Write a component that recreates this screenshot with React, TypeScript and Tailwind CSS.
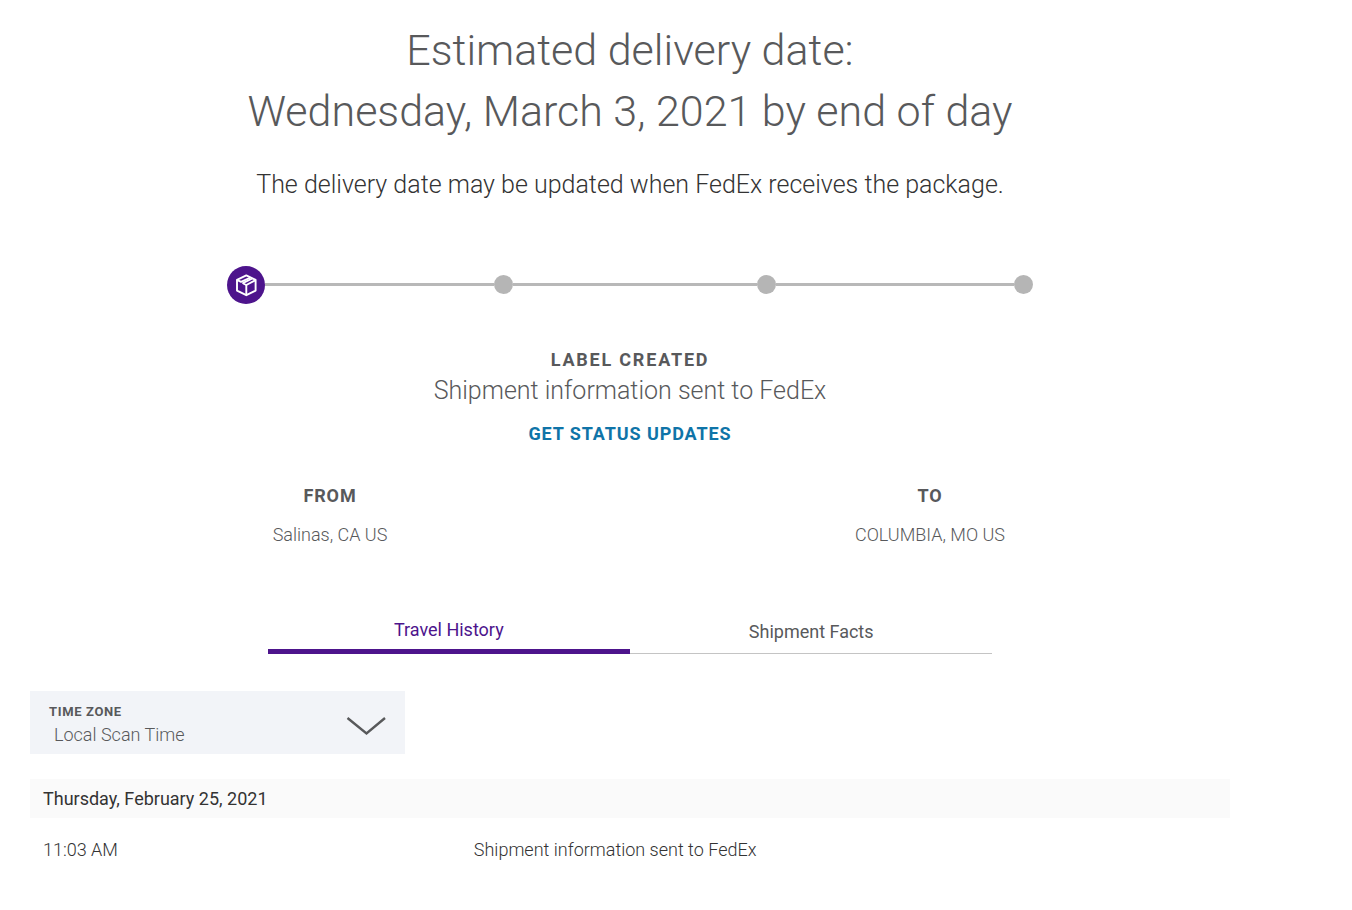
import { useState } from "react";

const TABS = ["Travel History", "Shipment Facts"];

function PackageIcon() {
  return (
    <svg viewBox="0 -2 38 40" className="h-10 w-[38px] shrink-0" role="img" aria-label="Label created">
      <circle cx="19" cy="19" r="19" fill="#4d148c" />
      <g fill="none" stroke="#fff" strokeWidth="1.9" strokeLinejoin="round">
        <path d="M19.3 9.4 L28.6 13.9 V24.6 L19.3 29.2 L10 24.6 V13.9 Z" />
        <path d="M10 13.9 L14 15.9 L23.4 11.6" />
        <path d="M16.2 17.5 L19.3 19 L28.6 14.2" />
        <path d="M16.2 17.9 V16.9 L25.4 12.5" />
        <path d="M19.3 19 V29.2" />
      </g>
    </svg>
  );
}

function Dot() {
  return <span className="size-[19px] shrink-0 rounded-full bg-[#b5b5b5]" />;
}

function ProgressTracker() {
  return (
    <div className="mx-auto mt-[61px] flex w-[67.2%] items-center">
      <PackageIcon />
      <span className="h-[3px] grow-229 basis-0 bg-[#b8b8b8]" />
      <Dot />
      <span className="h-[3px] grow-244 basis-0 bg-[#b8b8b8]" />
      <Dot />
      <span className="h-[3px] grow-238 basis-0 bg-[#b8b8b8]" />
      <Dot />
    </div>
  );
}

function Place({ label, city }: { label: string; city: string }) {
  return (
    <div className="w-1/2">
      <h2 className="text-[18px] leading-6 font-bold tracking-wider">{label}</h2>
      <p className="mt-[13px] text-[18px] leading-7 font-light">{city}</p>
    </div>
  );
}

export default function App() {
  const [tab, setTab] = useState(TABS[0]);

  return (
    <main className="max-w-[1260px] px-[30px] pt-5 pb-10 font-['Roboto','Liberation_Sans',sans-serif] text-[#58595b]">
      <section className="text-center">
        <h1 className="text-[43px] leading-[61px] font-light">
          Estimated delivery date:
          <br />
          Wednesday, March 3, 2021 by end of day
        </h1>
        <p className="mt-[25px] text-[25px] leading-9 font-light text-[#333333]">
          The delivery date may be updated when FedEx receives the package.
        </p>

        <ProgressTracker />

        <h2 className="mt-11 text-[18px] leading-6 font-bold tracking-widest">LABEL CREATED</h2>
        <p className="text-[25px] leading-[38px] font-light">Shipment information sent to FedEx</p>
        <a href="#updates" className="mt-3 inline-block text-[18px] leading-6 font-bold tracking-wider text-[#0f74a8]">
          GET STATUS UPDATES
        </a>

        <div className="mt-[37px] flex justify-between">
          <Place label="FROM" city="Salinas, CA US" />
          <Place label="TO" city="COLUMBIA, MO US" />
        </div>
      </section>

      <div role="tablist" className="mx-auto mt-[61px] grid w-[60.4%] grid-cols-2">
        {TABS.map((name) => (
          <button
            key={name}
            type="button"
            role="tab"
            aria-selected={tab === name}
            onClick={() => setTab(name)}
            className={
              tab === name
                ? "h-11 border-b-[5px] border-[#4d148c] text-[18px] text-[#4d148c]"
                : "h-11 border-b border-[#c4c4c4] text-[18px]"
            }
          >
            {name}
          </button>
        ))}
      </div>

      <div className="relative mt-[37px] w-full max-w-[375px] bg-[#f2f4f8]">
        <div className="flex flex-col pt-[13px]">
          <label htmlFor="zone" className="pl-[19px] text-[13px] leading-4 font-bold tracking-wider">
            TIME ZONE
          </label>
          <select
            id="zone"
            className="w-full cursor-pointer appearance-none bg-transparent pb-1 pl-6 text-[18px] leading-[30px] font-light outline-none"
          >
            <option>Local Scan Time</option>
            <option>Current Time Zone</option>
          </select>
        </div>
        <svg
          viewBox="0 0 40 20"
          className="pointer-events-none absolute top-[25px] right-[19px] h-5 w-10"
          fill="none"
          stroke="#58595b"
          strokeWidth="2.4"
          aria-hidden="true"
        >
          <path d="M1.5 2 L20.5 17.5 L39 2" />
        </svg>
      </div>

      <table className="mt-[25px] w-full table-fixed border-collapse text-left text-[18px] leading-[39px] text-[#333333]">
        <colgroup>
          <col className="w-[35.9%]" />
          <col />
        </colgroup>
        <thead>
          <tr className="bg-[#fafafa]">
            <th colSpan={2} scope="colgroup" className="px-[13px] font-normal">
              Thursday, February 25, 2021
            </th>
          </tr>
        </thead>
        <tbody>
          <tr>
            <td className="px-[13px] pt-3 font-light">11:03 AM</td>
            <td className="px-[13px] pt-3 font-light">Shipment information sent to FedEx</td>
          </tr>
        </tbody>
      </table>
    </main>
  );
}
